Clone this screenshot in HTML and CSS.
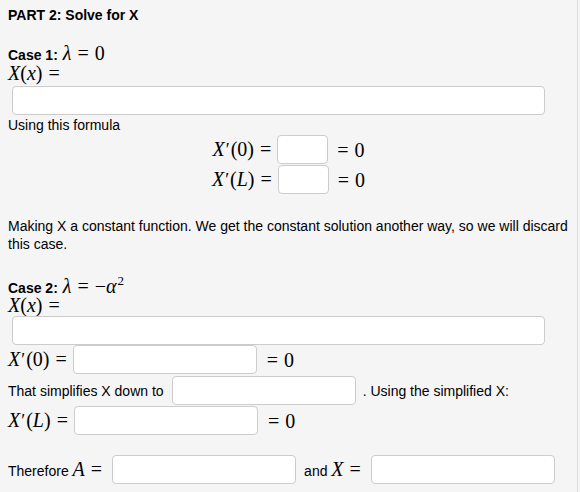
FILE: index.html
```html
<!DOCTYPE html>
<html>
<head>
<meta charset="utf-8">
<link rel="stylesheet" href="styles.css">
</head>
<body>
<div class="page">
  <div class="title">PART 2: Solve for X</div>

  <div class="case"><b>Case 1:</b><span class="m"><i>λ</i><span class="eq">=</span>0</span></div>
  <div class="mline"><span class="m"><i>X</i>(<i>x</i>)<span class="eq">=</span></span></div>
  <div class="wide"><span class="box full"></span></div>
  <div class="text">Using this formula</div>

  <div class="display">
    <div class="drow"><span class="m lab"><i>X</i><span class="pr">′</span>(0)<span class="eq">=</span></span><span class="box small"></span><span class="m z"><span class="eq">=</span>0</span></div>
    <div class="drow"><span class="m lab"><i>X</i><span class="pr">′</span>(<i>L</i>)<span class="eq">=</span></span><span class="box small"></span><span class="m z"><span class="eq">=</span>0</span></div>
  </div>

  <div class="para">Making X a constant function. We get the constant solution another way, so we will discard this case.</div>

  <div class="case case2"><b>Case 2:</b><span class="m"><i>λ</i><span class="eq">=</span>−<i>α</i><sup>2</sup></span></div>
  <div class="mline m2"><span class="m"><i>X</i>(<i>x</i>)<span class="eq">=</span></span></div>
  <div class="wide"><span class="box full"></span></div>

  <div class="row r1"><span class="m"><i>X</i><span class="pr">′</span>(0)<span class="eq">=</span></span><span class="box med"></span><span class="m z"><span class="eq">=</span>0</span></div>
  <div class="row r2"><span>That simplifies X down to</span><span class="box med"></span><span class="after">. Using the simplified X:</span></div>
  <div class="row r3"><span class="m"><i>X</i><span class="pr">′</span>(<i>L</i>)<span class="eq">=</span></span><span class="box med"></span><span class="m z"><span class="eq">=</span>0</span></div>

  <div class="row r4"><span class="tf">Therefore <span class="m"><i>A</i><span class="eq">=</span></span></span><span class="box med"></span><span class="and">and <span class="m"><i>X</i><span class="eq">=</span></span></span><span class="box med"></span></div>
</div>
</body>
</html>
```
FILE: styles.css
```css
html, body {
  margin: 0;
  padding: 0;
  background: #f5f5f5;
}
.page {
  width: 561px;
  height: 486px;
  padding: 6px 8px 0 8px;
  border-right: 1px solid #dcdcdc;
  font-family: "Liberation Sans", Arial, sans-serif;
  font-size: 14px;
  line-height: 18px;
  color: #000;
}
.title {
  font-weight: bold;
  height: 18px;
}
.case {
  margin-top: 20px;
  height: 18px;
  display: flex;
  align-items: baseline;
  gap: 5px;
}
.case2 { margin-top: 24px; }
.m {
  font-family: "Liberation Serif", "DejaVu Serif", serif;
  font-size: 20px;
  white-space: nowrap;
}
.m i { font-style: italic; }
.m .eq { margin: 0 6px; }
.m .pr { font-size: 18px; margin-left: 1px; margin-right: 1px; }
.m sup { font-size: 13px; vertical-align: 8px; line-height: 0; margin-left: 1px; }
.mline { height: 22px; line-height: 22px; }
.mline.m2 { height: 21px; line-height: 21px; }
.wide { padding-left: 4px; display: flex; margin-top: 2px; }
.mline.m2 + .wide { margin-top: 0; }
.box {
  display: inline-block;
  flex: none;
  box-sizing: border-box;
  height: 29px;
  background: #fff;
  border: 1px solid #cccccc;
  border-radius: 4px;
}
.full { width: 533px; }
.small { width: 51px; }
.med { width: 184px; }
.text { margin-top: 1px; height: 18px; }
.display {
  margin-top: 1px;
  display: flex;
  flex-direction: column;
  align-items: center;
  gap: 1px;
}
.drow {
  display: flex;
  align-items: center;
  height: 29px;
}
.drow .z { margin-left: 3px; }
.para { margin-top: 23px; }
.row {
  display: flex;
  align-items: center;
  height: 29px;
}
.r1 { margin-top: 0; }
.r2 { margin-top: 2px; }
.r3 { margin-top: 1px; }
.r4 { margin-top: 20px; }
.row .z { margin-left: 4px; }
.r2 > span:first-child { margin-right: 8px; }
.row .after { margin-left: 7px; }
.r4 .tf { margin-right: 4px; }
.r4 .and { margin-left: 8px; margin-right: 4px; }
```
